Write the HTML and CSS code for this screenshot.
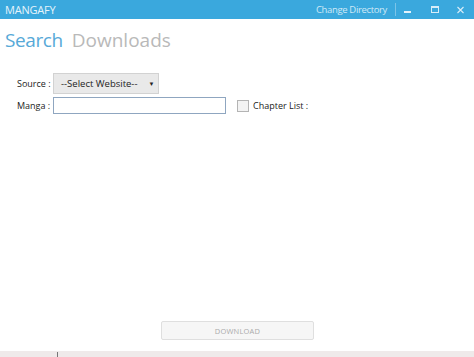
FILE: index.html
```html
<!DOCTYPE html>
<html lang="en">
<head>
    <meta charset="UTF-8">
    <title>Mangafy</title>
    <link rel="stylesheet" href="styles.css">
</head>
<body>
<div class="window">
    <div class="title-bar">
        <span class="app-name">MANGAFY</span>
        <div class="title-actions">
            <span class="change-dir">Change Directory</span>
            <span class="sep"></span>
            <span class="win-btn min"><svg width="7" height="8" viewBox="0 0 7 8"><rect x="0" y="5" width="7" height="2" fill="#e3f2fb"/></svg></span>
            <span class="win-btn max"><svg width="8" height="8" viewBox="0 0 8 8"><rect x="0.5" y="0.5" width="7" height="6" fill="none" stroke="#d8edf8"/><rect x="0.5" y="0.5" width="7" height="1.5" fill="#d8edf8"/></svg></span>
            <span class="win-btn close"><svg width="7" height="8" viewBox="0 0 7 8"><path d="M0.5 1 L6.5 7 M6.5 1 L0.5 7" stroke="#d8edf8" stroke-width="1.1"/></svg></span>
        </div>
    </div>

    <div class="tabs">
        <span class="tab active">Search</span>
        <span class="tab">Downloads</span>
    </div>

    <div class="form">
        <div class="row">
            <label class="lbl">Source :</label>
            <div class="select">--Select Website--<span class="arrow">&#9660;</span></div>
        </div>
        <div class="row">
            <label class="lbl">Manga :</label>
            <div class="input"></div>
            <span class="check"></span>
            <span class="check-lbl">Chapter List :</span>
        </div>
    </div>

    <div class="spacer"></div>

    <div class="footer">
        <button class="download">DOWNLOAD</button>
    </div>

    <div class="status-bar"><span class="status-mark"></span></div>
</div>
</body>
</html>
```

FILE: styles.css
```css
body {
    margin: 0;
    font-family: "Open Sans", "Noto Sans", sans-serif;
    background: #fff;
}

.window {
    width: 474px;
    height: 357px;
    display: flex;
    flex-direction: column;
    overflow: hidden;
}

/* Title bar */
.title-bar {
    height: 19px;
    background: #3aa8dd;
    display: flex;
    align-items: center;
    justify-content: space-between;
    padding-left: 5px;
}

.app-name {
    color: #e6f4fb;
    font-size: 11px;
    letter-spacing: -0.2px;
}

.title-actions {
    display: flex;
    align-items: center;
    height: 100%;
    padding-right: 10px;
}

.change-dir {
    color: #cfe9f7;
    font-size: 9.5px;
    letter-spacing: -0.35px;
    margin-right: 8px;
}

.sep {
    width: 1px;
    height: 13px;
    background: #7cc4e8;
    margin-right: 8px;
}

.win-btn {
    display: flex;
    align-items: center;
}

.win-btn.min { margin-right: 20px; }
.win-btn.max { margin-right: 18px; }

/* Tabs */
.tabs {
    display: flex;
    gap: 9px;
    padding: 9px 0 0 5px;
    height: 33px;
    box-sizing: border-box;
}

.tab {
    font-size: 19px;
    line-height: 24px;
    color: #b9b9b9;
    letter-spacing: 0;
}

.tab.active {
    color: #57a9d8;
    letter-spacing: -0.4px;
}

/* Form */
.form {
    padding: 21px 0 0 17px;
    display: flex;
    flex-direction: column;
    gap: 3px;
}

.row {
    display: flex;
    align-items: center;
    font-size: 9px;
    color: #222;
}

.lbl {
    width: 36px;
}

.select {
    width: 106px;
    height: 21px;
    box-sizing: border-box;
    background: #e9e9e9;
    border: 1px solid #d2d2d2;
    display: flex;
    align-items: center;
    padding-left: 7px;
    color: #222;
    font-size: 9.5px;
}

.arrow {
    font-size: 6px;
    margin-left: 11px;
}

.input {
    width: 173px;
    height: 17px;
    box-sizing: border-box;
    border: 1px solid #8fa6c0;
    background: #fff;
}

.check {
    width: 10px;
    height: 10px;
    border: 1px solid #b4b4b4;
    background: #f3f3f3;
    margin-left: 11px;
}

.check-lbl {
    margin-left: 4px;
}

.spacer { flex: 1; }

/* Footer */
.footer {
    display: flex;
    justify-content: center;
    padding: 0 0 11px 0;
}

.download {
    width: 153px;
    height: 19px;
    margin-left: 1px;
    background: #f6f6f6;
    border: 1px solid #dfdfdf;
    border-radius: 2px;
    color: #ababab;
    font-family: inherit;
    font-size: 7.5px;
    letter-spacing: 0.2px;
}

.status-bar {
    height: 6px;
    background: #efeaea;
    position: relative;
}

.status-mark {
    position: absolute;
    left: 57px;
    top: 1px;
    width: 1px;
    height: 5px;
    background: #777;
}
```
